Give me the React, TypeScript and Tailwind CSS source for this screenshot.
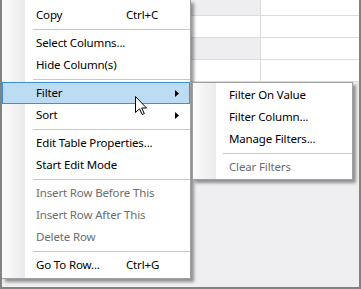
import React from 'react';

type Item = { label: string; shortcut?: string; sub?: boolean; disabled?: boolean; active?: boolean };

const mainMenu: Item[][] = [
  [{ label: 'Copy', shortcut: 'Ctrl+C' }],
  [{ label: 'Select Columns...' }, { label: 'Hide Column(s)' }],
  [{ label: 'Filter', sub: true, active: true }, { label: 'Sort', sub: true }],
  [{ label: 'Edit Table Properties...' }, { label: 'Start Edit Mode' }],
  [
    { label: 'Insert Row Before This', disabled: true },
    { label: 'Insert Row After This', disabled: true },
    { label: 'Delete Row', disabled: true },
  ],
  [{ label: 'Go To Row...', shortcut: 'Ctrl+G' }],
];

const filterMenu: Item[][] = [
  [{ label: 'Filter On Value' }, { label: 'Filter Column...' }, { label: 'Manage Filters...' }],
  [{ label: 'Clear Filters', disabled: true }],
];

function Arrow() {
  return (
    <svg width="4" height="7" viewBox="0 0 4 7" className="ml-auto mr-[10px]">
      <path d="M0 0 L4 3.5 L0 7 Z" fill="#000" />
    </svg>
  );
}

function MenuRow({ item, indent }: { item: Item; indent: number }) {
  return (
    <div
      className={
        'h-[22px] flex items-center border text-[11.5px] tracking-[-0.15px] leading-none ' +
        (item.active ? 'bg-[#bcdcf4] border-[#3d8fdd] ' : 'border-transparent ') +
        (item.disabled ? 'text-[#6d6d6d]' : 'text-black')
      }
      style={{ paddingLeft: indent }}
    >
      <span className={item.shortcut ? 'w-[90px]' : ''}>{item.label}</span>
      {item.shortcut && <span>{item.shortcut}</span>}
      {item.sub && <Arrow />}
    </div>
  );
}

function Separator({ inset }: { inset: number }) {
  return (
    <div className="h-[6px] flex items-center" style={{ paddingLeft: inset }}>
      <div className="h-px w-full bg-[#c8c8c8]" />
    </div>
  );
}

function Menu({ groups, indent, inset }: { groups: Item[][]; indent: number; inset: number }) {
  return (
    <>
      {groups.map((g, gi) => (
        <React.Fragment key={gi}>
          {gi > 0 && <Separator inset={inset} />}
          {g.map((it) => (
            <MenuRow key={it.label} item={it} indent={indent} />
          ))}
        </React.Fragment>
      ))}
    </>
  );
}

function Cursor() {
  return (
    <svg width="12" height="19" viewBox="0 0 12 19" className="absolute left-[133px] top-[96px]">
      <path
        d="M0.5 0.5 L0.5 16.5 L4.5 12.8 L7.2 18.5 L9.3 17.6 L6.7 12 L11.5 12 Z"
        fill="#fff"
        stroke="#000"
        strokeWidth="1"
        strokeLinejoin="miter"
      />
    </svg>
  );
}

export default function App() {
  const gridRows = [
    { h: 'h-[16px]', shade: true },
    { h: 'h-[22px]', shade: false },
    { h: 'h-[22px]', shade: true },
    { h: 'h-[22px]', shade: false },
  ];

  return (
    <div className="relative w-[361px] h-[289px] overflow-hidden bg-[#efeff2] border-x-2 border-b-2 border-[#828282] font-['Noto_Sans',sans-serif]">
      {/* table behind the menus */}
      <div className="w-[357px] bg-white">
        {gridRows.map((r, i) => (
          <div key={i} className={r.h + ' flex border-b border-[#dcdcdc]'}>
            <div className={'w-[259px] border-r border-[#dcdcdc] ' + (r.shade ? 'bg-[#eeeef0]' : 'bg-white')} />
            <div className="flex-1 bg-white" />
          </div>
        ))}
      </div>

      {/* context menu */}
      <div className="absolute left-0 top-0 w-[189px] pt-[4px] pb-[2px] border-r border-b border-[#a0a0a0] bg-[linear-gradient(to_right,#fbfbfb_0px,#ebebeb_23px,#ffffff_23px)] shadow-[3px_3px_3px_rgba(0,0,0,0.4)]">
        <Menu groups={mainMenu} indent={33} inset={31} />
      </div>

      {/* filter submenu */}
      <div className="absolute left-[190px] top-[82px] w-[161px] py-[1px] border border-[#a0a0a0] bg-[linear-gradient(to_right,#fbfbfb_0px,#ebebeb_23px,#ffffff_23px)] shadow-[3px_3px_3px_rgba(0,0,0,0.4)]">
        <Menu groups={filterMenu} indent={35} inset={30} />
      </div>

      <Cursor />
    </div>
  );
}
